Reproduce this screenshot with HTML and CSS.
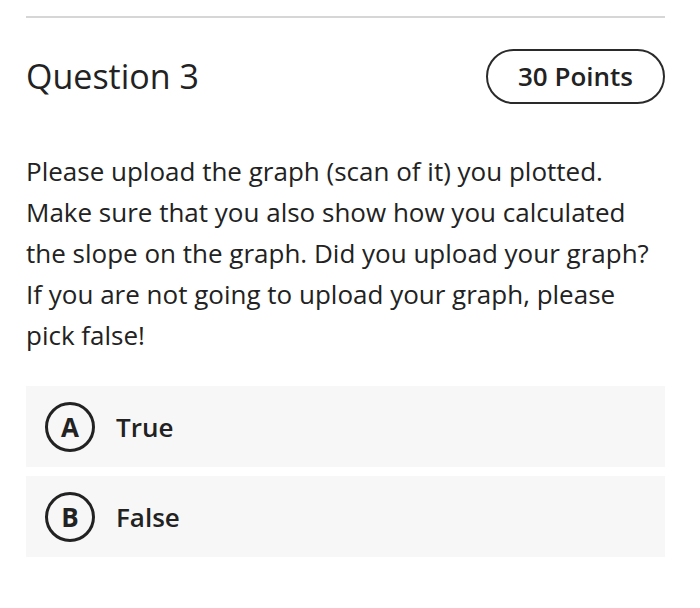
FILE: index.html
```html
<!DOCTYPE html>
<html>
<head>
<meta charset="utf-8">
<link rel="stylesheet" href="styles.css">
</head>
<body>
<div class="page">
  <div class="rule"></div>
  <div class="head">
    <h1 class="title">Question 3</h1>
    <div class="points">30 Points</div>
  </div>
  <p class="prompt">Please upload the graph (scan of it) you plotted. Make sure that you also show how you calculated the slope on the graph. Did you upload your graph? If you are not going to upload your graph, please pick false!</p>
  <div class="options">
    <div class="option"><span class="letter">A</span><span class="label">True</span></div>
    <div class="option"><span class="letter">B</span><span class="label">False</span></div>
  </div>
</div>
</body>
</html>
```
FILE: styles.css
```css
html, body { margin: 0; padding: 0; background: #fff; }
body { font-family: "Open Sans", "Noto Sans", sans-serif; color: #222; }
.page { padding: 16px 35px 0 26px; }
.rule { height: 2px; background: #d6d6d6; }
.head { display: flex; align-items: center; justify-content: space-between; margin-top: 30px; }
.title { margin: 0; font-size: 34px; font-weight: 400; line-height: 56px; }
.points { height: 51px; padding: 0 30px; border: 2px solid #2a2a2a; border-radius: 28px; font-size: 26px; font-weight: 600; display: flex; align-items: center; }
.prompt { margin: 47px 0 0; font-size: 26px; line-height: 41px; }
.options { margin-top: 30px; display: flex; flex-direction: column; gap: 9px; }
.option { height: 81px; background: #f7f7f7; display: flex; align-items: center; padding-left: 19px; }
.letter { box-sizing: border-box; width: 50px; height: 50px; border: 3px solid #222; border-radius: 50%; display: flex; align-items: center; justify-content: center; font-size: 26px; font-weight: 700; }
.label { margin-left: 21px; font-size: 26px; font-weight: 600; }
```
